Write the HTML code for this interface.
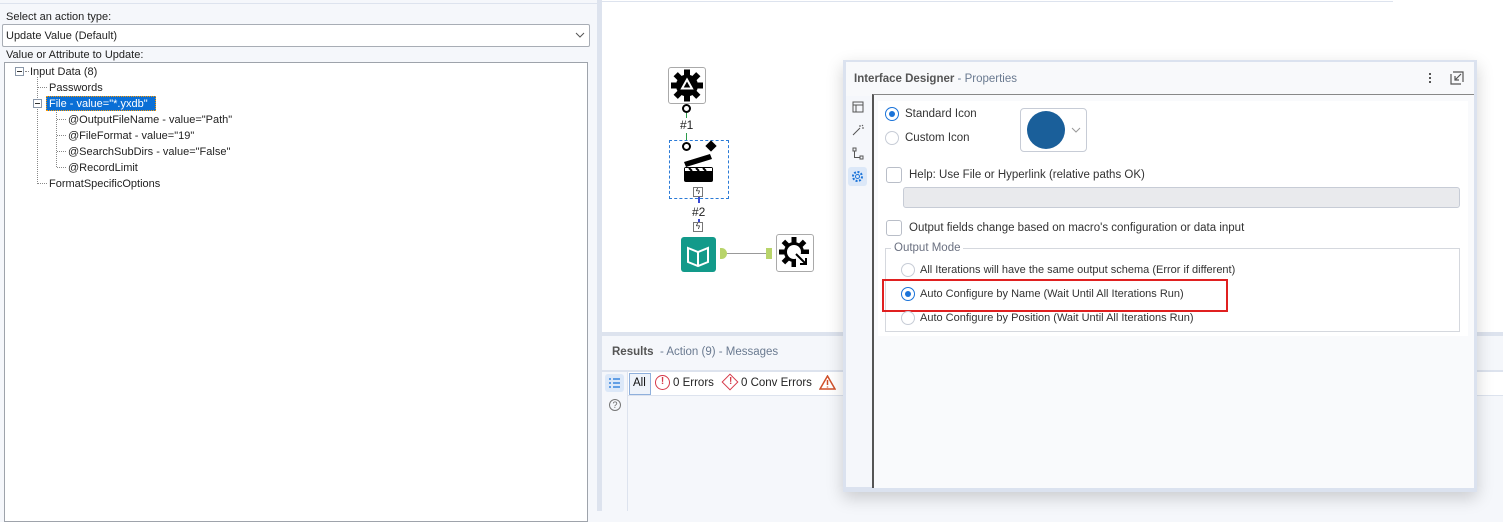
<!DOCTYPE html>
<html><head><meta charset="utf-8"><style>
*{box-sizing:border-box;margin:0;padding:0}
body{width:1503px;height:511px;overflow:hidden;position:relative;background:#f5f7fb;font-family:"Segoe UI","Liberation Sans",sans-serif;color:#222}
.a{position:absolute}
.t{font-size:11px;white-space:nowrap;padding-top:2px}
.d{font-size:11.5px;white-space:nowrap;color:#333;padding-top:2px}
.radio{position:absolute;width:14px;height:14px;border-radius:50%;border:1.5px solid #c7ccd6;background:#fff}
.radio.on{border-color:#1a73d9}
.radio.on:after{content:"";position:absolute;left:2.5px;top:2.5px;width:6px;height:6px;border-radius:50%;background:#1a73d9}
.cb{position:absolute;width:16px;height:16px;border:1px solid #b9bec8;border-radius:3px;background:#fff}
.dot{border-left:1px dotted #888}
.hd{border-top:1px dotted #888;height:0}
.q{position:absolute;width:9px;height:9px;border-radius:50%;background:#000}
.q:after{content:"";position:absolute;left:2px;top:2px;width:5px;height:5px;border-radius:50%;background:#fff}
</style></head><body>
<div class="a" style="left:0;top:3px;width:600px;height:1px;background:#dde3ee"></div>
<div class="a t" style="left:6px;top:9px">Select an action type:</div>
<div class="a" style="left:2px;top:24px;width:588px;height:23px;border:1px solid #a8adb5;background:#fff;border-radius:2px"></div>
<div class="a t" style="left:6px;top:28px">Update Value (Default)</div>
<svg class="a" style="left:575px;top:32px" width="10" height="7"><path d="M1 1 L5 5 L9 1" fill="none" stroke="#555" stroke-width="1"/></svg>
<div class="a t" style="left:6px;top:47px">Value or Attribute to Update:</div>
<div class="a" style="left:4px;top:62px;width:584px;height:460px;border:1px solid #9ea3ab;background:#fff"></div>
<div class="a dot" style="left:37px;top:77px;height:107px"></div>
<div class="a dot" style="left:56px;top:108px;height:59px"></div>
<div class="a hd" style="left:25px;top:71px;width:4px"></div>
<div class="a hd" style="left:38px;top:87px;width:9px"></div>
<div class="a hd" style="left:38px;top:183px;width:9px"></div>
<div class="a hd" style="left:57px;top:119px;width:9px"></div>
<div class="a hd" style="left:57px;top:135px;width:9px"></div>
<div class="a hd" style="left:57px;top:151px;width:9px"></div>
<div class="a hd" style="left:57px;top:167px;width:9px"></div>
<div class="a" style="left:15px;top:67px;width:9px;height:9px;border:1px solid #8a97a8;background:#fff"></div>
<div class="a" style="left:17px;top:71px;width:5px;height:1px;background:#333"></div>
<div class="a" style="left:33px;top:99px;width:9px;height:9px;border:1px solid #8a97a8;background:#fff"></div>
<div class="a" style="left:35px;top:103px;width:5px;height:1px;background:#333"></div>
<div class="a t" style="left:30px;top:64px">Input Data (8)</div>
<div class="a t" style="left:49px;top:80px">Passwords</div>
<div class="a" style="left:46px;top:96px;width:110px;height:15px;background:#0a6fd6;border:1px dotted #f90"></div>
<div class="a t" style="left:49px;top:96px;color:#fff">File - value="*.yxdb"</div>
<div class="a t" style="left:68px;top:112px">@OutputFileName - value="Path"</div>
<div class="a t" style="left:68px;top:128px">@FileFormat - value="19"</div>
<div class="a t" style="left:68px;top:144px">@SearchSubDirs - value="False"</div>
<div class="a t" style="left:68px;top:160px">@RecordLimit</div>
<div class="a t" style="left:49px;top:176px">FormatSpecificOptions</div>
<div class="a" style="left:597px;top:0;width:5px;height:511px;background:#dde3ee"></div>
<div class="a" style="left:602px;top:0;width:901px;height:332px;background:#fff"></div>
<div class="a" style="left:602px;top:1px;width:791px;height:1px;background:#dde3ee"></div>
<div class="a" style="left:602px;top:332px;width:901px;height:4px;background:#dde3ee"></div>
<div class="a" style="left:668px;top:67px;width:38px;height:37px;border:1px solid #aaa;border-radius:3px;background:#fff"></div>
<svg class="a" style="left:670px;top:69px" width="34" height="33" viewBox="0 0 34 33"><g transform="translate(17,16.5)"><circle r="11" fill="#000"/><g fill="#000"><rect x="-3" y="-16" width="6" height="32"/><rect x="-3" y="-16" width="6" height="32" transform="rotate(45)"/><rect x="-3" y="-16" width="6" height="32" transform="rotate(90)"/><rect x="-3" y="-16" width="6" height="32" transform="rotate(135)"/></g><path d="M0 -6 L5 3 L-5 3Z" fill="none" stroke="#fff" stroke-width="2"/></g></svg>
<div class="q" style="left:682px;top:104px"></div>
<div class="a" style="left:686px;top:113px;width:1px;height:5px;background:#2a9a4a"></div>
<div class="a t" style="left:680px;top:116px;font-size:12px">#1</div>
<div class="a" style="left:686px;top:133px;width:1px;height:8px;background:#2a9a4a"></div>
<div class="a" style="left:669px;top:140px;width:60px;height:59px;border:1px dashed #2a7ad6"></div>
<div class="q" style="left:682px;top:142px"></div>
<div class="a" style="left:707px;top:142px;width:8px;height:8px;background:#000;transform:rotate(45deg)"></div>
<svg class="a" style="left:682px;top:150px" width="34" height="33" viewBox="0 0 34 33"><path d="M2 12 L28 4 L30 9 L4 17Z" fill="#000"/><rect x="2" y="17" width="29" height="15" rx="2" fill="#000"/><rect x="3" y="18" width="27" height="3" fill="#fff"/><path d="M7 18 L10 21 M14 18 L17 21 M21 18 L24 21" stroke="#000" stroke-width="2"/></svg>
<div class="a" style="left:693px;top:187px;width:10px;height:10px;border:1px solid #777;background:#fff;font-size:8px;line-height:8px;text-align:center">ϟ</div>
<div class="a" style="left:698px;top:197px;width:2px;height:6px;background:#3a4ad6"></div>
<div class="a t" style="left:692px;top:203px;font-size:12px">#2</div>
<div class="a" style="left:698px;top:219px;width:2px;height:4px;background:#3a4ad6"></div>
<div class="a" style="left:693px;top:222px;width:10px;height:10px;border:1px solid #777;background:#fff;font-size:8px;line-height:8px;text-align:center">ϟ</div>
<div class="a" style="left:681px;top:237px;width:35px;height:35px;border-radius:3px;background:#129a8a"></div>
<svg class="a" style="left:684px;top:240px" width="29" height="29" viewBox="0 0 29 29"><path d="M4 8 L14 12 L24 8 L24 22 L14 26 L4 22Z M14 12 L14 26" fill="none" stroke="#fff" stroke-width="2"/></svg>
<div class="a" style="left:720px;top:248px;width:7px;height:11px;background:#b8d46a;border-radius:0 6px 6px 0"></div>
<div class="a" style="left:727px;top:253px;width:39px;height:1px;background:#999"></div>
<div class="a" style="left:766px;top:248px;width:6px;height:11px;background:#b8d46a"></div>
<div class="a" style="left:776px;top:234px;width:38px;height:38px;border:1px solid #aaa;border-radius:3px;background:#fff"></div>
<svg class="a" style="left:778px;top:236px" width="34" height="34" viewBox="0 0 34 34"><g transform="translate(16,16)"><g fill="#000"><rect x="-2.5" y="-15" width="5" height="30"/><rect x="-2.5" y="-15" width="5" height="30" transform="rotate(45)"/><rect x="-2.5" y="-15" width="5" height="30" transform="rotate(90)"/><rect x="-2.5" y="-15" width="5" height="30" transform="rotate(135)"/></g><circle r="10" fill="#000"/><circle r="7" fill="#fff"/><rect x="2" y="2" width="14" height="14" fill="#fff"/><path d="M2 2 L12 12 M12 6 L12 12 L6 12" fill="none" stroke="#000" stroke-width="2"/></g></svg>
<div class="a d" style="left:612px;top:344px;font-weight:bold;color:#555">Results <span style="font-weight:normal;color:#6a7a90">&nbsp;- Action (9) - Messages</span></div>
<div class="a" style="left:602px;top:370px;width:901px;height:2px;background:#dde3ee"></div>
<div class="a" style="left:627px;top:372px;width:876px;height:24px;background:#fff;border-bottom:1px solid #dde3ee"></div>
<div class="a" style="left:627px;top:372px;width:1px;height:139px;background:#dde3ee"></div>
<div class="a" style="left:605px;top:374px;width:19px;height:18px;background:#dce8f8;border-radius:3px"></div>
<svg class="a" style="left:608px;top:377px" width="13" height="12"><g stroke="#1a73d9" stroke-width="1.3"><path d="M1 2h2M5 2h7M1 6h2M5 6h7M1 10h2M5 10h7"/></g></svg>
<div class="a" style="left:609px;top:399px;width:12px;height:12px;border:1px solid #777;border-radius:50%;font-size:9px;line-height:10px;text-align:center;color:#666">?</div>
<div class="a" style="left:629px;top:373px;width:22px;height:22px;border:1px solid #8fb0dc;background:#eef3fa"></div>
<div class="a d" style="left:633px;top:375px;color:#111">All</div>
<div class="a" style="left:655px;top:375px;width:15px;height:15px;border:1.5px solid #d63a4a;border-radius:50%;color:#d63a4a;font-size:10px;font-weight:bold;text-align:center;line-height:12px">!</div>
<div class="a d" style="left:673px;top:375px;color:#222">0 Errors</div>
<div class="a" style="left:724px;top:376px;width:12px;height:12px;border:1.5px solid #d63a4a;transform:rotate(45deg)"></div>
<div class="a" style="left:729px;top:376px;font-size:10px;font-weight:bold;color:#d63a4a">!</div>
<div class="a d" style="left:741px;top:375px;color:#222">0 Conv Errors</div>
<svg class="a" style="left:819px;top:375px" width="17" height="15"><path d="M8.5 1 L16 14 L1 14Z" fill="none" stroke="#d0502a" stroke-width="1.5"/><path d="M8.5 5v5M8.5 11.5v1" stroke="#d0502a" stroke-width="1.5"/></svg>
<div class="a" style="left:843px;top:60px;width:634px;height:432px;box-shadow:0 6px 16px rgba(0,0,0,0.18);background:#dbe2ef"></div>
<div class="a" style="left:846px;top:62px;width:628px;height:34px;background:#f8f9fb"></div>
<div class="a d" style="left:854px;top:71px;font-weight:bold;color:#555">Interface Designer <span style="font-weight:normal;color:#6a7a90">- Properties</span></div>
<div class="a" style="left:1429px;top:73px;width:2px;height:2px;background:#555;box-shadow:0 4px 0 #555,0 8px 0 #555"></div>
<svg class="a" style="left:1450px;top:71px" width="14" height="14"><path d="M3 1h10v10M1 3v10h10M11 3L5 9M5 5v4h4" fill="none" stroke="#555" stroke-width="1.2"/></svg>
<div class="a" style="left:846px;top:96px;width:26px;height:391px;background:#f5f7fb"></div>
<svg class="a" style="left:852px;top:101px" width="12" height="12"><rect x="1" y="1" width="10" height="10" fill="none" stroke="#555"/><path d="M1 4h10M4 4v7" stroke="#555"/></svg>
<svg class="a" style="left:852px;top:124px" width="12" height="12"><path d="M1 11L8 4M8 1v2M10 4h2M10 2l1-1" stroke="#555" fill="none"/></svg>
<svg class="a" style="left:852px;top:147px" width="12" height="14"><rect x="1" y="1" width="3" height="3" fill="none" stroke="#555"/><rect x="8" y="9" width="3" height="3" fill="none" stroke="#555"/><path d="M2.5 4v6.5H8" stroke="#555" fill="none"/></svg>
<div class="a" style="left:848px;top:167px;width:19px;height:19px;background:#dce8f8;border-radius:3px"></div>
<svg class="a" style="left:851px;top:170px" width="13" height="13"><circle cx="6.5" cy="6.5" r="4.5" fill="none" stroke="#1a73d9" stroke-width="2" stroke-dasharray="2 1.5"/><circle cx="6.5" cy="6.5" r="2" fill="none" stroke="#1a73d9"/></svg>
<div class="a" style="left:872px;top:94px;width:602px;height:394px;background:#f9fafc;border-left:2px solid #555;border-top:1px solid #888"></div>
<div class="a" style="left:878px;top:101px;width:590px;height:235px;background:#fff"></div>
<div class="radio on" style="left:885px;top:107px"></div>
<div class="a d" style="left:905px;top:106px">Standard Icon</div>
<div class="radio" style="left:885px;top:131px"></div>
<div class="a d" style="left:905px;top:130px">Custom Icon</div>
<div class="a" style="left:1020px;top:108px;width:67px;height:44px;border:1px solid #c7ccd6;border-radius:4px;background:#fff"></div>
<div class="a" style="left:1027px;top:111px;width:38px;height:38px;border-radius:50%;background:#1a5f9a"></div>
<svg class="a" style="left:1071px;top:127px" width="10" height="6"><path d="M1 1L5 5L9 1" fill="none" stroke="#999"/></svg>
<div class="cb" style="left:886px;top:167px"></div>
<div class="a d" style="left:909px;top:167px">Help: Use File or Hyperlink (relative paths OK)</div>
<div class="a" style="left:903px;top:187px;width:557px;height:21px;background:#e9eaed;border:1px solid #c7ccd6;border-radius:3px"></div>
<div class="cb" style="left:886px;top:220px"></div>
<div class="a d" style="left:909px;top:220px">Output fields change based on macro's configuration or data input</div>
<div class="a" style="left:885px;top:248px;width:575px;height:84px;border:1px solid #d5d8de"></div>
<div class="a d" style="left:891px;top:240px;background:#fff;padding:2px 3px 0;color:#6a7080">Output Mode</div>
<div class="radio" style="left:901px;top:263px"></div>
<div class="a d" style="left:920px;top:262px;font-size:11px">All Iterations will have the same output schema (Error if different)</div>
<div class="a" style="left:882px;top:279px;width:346px;height:33px;border:2px solid #e02020"></div>
<div class="radio on" style="left:901px;top:287px"></div>
<div class="a d" style="left:920px;top:286px;font-size:11px">Auto Configure by Name (Wait Until All Iterations Run)</div>
<div class="radio" style="left:901px;top:311px"></div>
<div class="a d" style="left:920px;top:310px;font-size:11px">Auto Configure by Position (Wait Until All Iterations Run)</div>
</body></html>
